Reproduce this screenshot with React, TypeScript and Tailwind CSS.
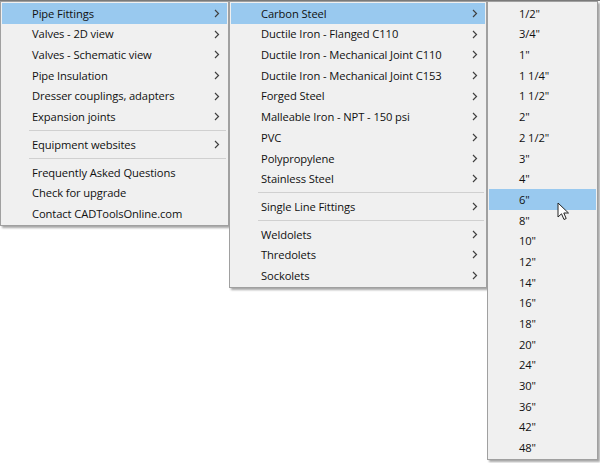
import React from "react";

type Item = { label: string; arrow?: boolean } | "sep";

const menu1: Item[] = [
  { label: "Pipe Fittings", arrow: true },
  { label: "Valves - 2D view", arrow: true },
  { label: "Valves - Schematic view", arrow: true },
  { label: "Pipe Insulation", arrow: true },
  { label: "Dresser couplings, adapters", arrow: true },
  { label: "Expansion joints", arrow: true },
  "sep",
  { label: "Equipment websites", arrow: true },
  "sep",
  { label: "Frequently Asked Questions" },
  { label: "Check for upgrade" },
  { label: "Contact CADToolsOnline.com" },
];

const menu2: Item[] = [
  { label: "Carbon Steel", arrow: true },
  { label: "Ductile Iron - Flanged C110", arrow: true },
  { label: "Ductile Iron - Mechanical Joint C110", arrow: true },
  { label: "Ductile Iron - Mechanical Joint C153", arrow: true },
  { label: "Forged Steel", arrow: true },
  { label: "Malleable Iron - NPT - 150 psi", arrow: true },
  { label: "PVC", arrow: true },
  { label: "Polypropylene", arrow: true },
  { label: "Stainless Steel", arrow: true },
  "sep",
  { label: "Single Line Fittings", arrow: true },
  "sep",
  { label: "Weldolets", arrow: true },
  { label: "Thredolets", arrow: true },
  { label: "Sockolets", arrow: true },
];

const sizes = [
  '1/2"', '3/4"', '1"', '1 1/4"', '1 1/2"', '2"', '2 1/2"', '3"', '4"', '6"', '8"',
  '10"', '12"', '14"', '16"', '18"', '20"', '24"', '30"', '36"', '42"', '48"',
];
const menu3: Item[] = sizes.map((s) => ({ label: s }));

function Chevron() {
  return (
    <svg width="6" height="9" viewBox="0 0 6 9" className="shrink-0">
      <polyline points="1,1 4.5,4.5 1,8" fill="none" stroke="#404040" strokeWidth="1.2" />
    </svg>
  );
}

function Menu({ items, active, width }: { items: Item[]; active: number; width: string }) {
  return (
    <div
      className={`${width} shrink-0 bg-[#f0f0f0] border border-[#a0a0a0] py-[1px] px-[1px] shadow-[2px_2px_2px_rgba(0,0,0,0.35)]`}
    >
      {items.map((it, i) =>
        it === "sep" ? (
          <div key={i} className="h-[7px] flex items-center pl-[27px] pr-[1px]">
            <div className="h-px w-full bg-[#d0d0d0]" />
          </div>
        ) : (
          <div
            key={i}
            className={`h-[20.7px] flex items-center pl-[30px] pr-[7px] ${
              i === active ? "bg-[#99c9ef]" : ""
            }`}
          >
            <span className="flex-1 whitespace-nowrap text-[11.2px] text-[#111] leading-none tracking-[-0.1px]">{it.label}</span>
            {it.arrow && <Chevron />}
          </div>
        )
      )}
    </div>
  );
}

export default function App() {
  return (
    <div
      className="relative w-[600px] h-[463px] bg-white overflow-hidden"
      style={{ fontFamily: '"Segoe UI", "Open Sans", "Noto Sans", sans-serif' }}
    >
      <div className="h-px w-full bg-[#7a7a7a]" />
      <div className="flex items-start">
        <Menu items={menu1} active={0} width="w-[229px]" />
        <Menu items={menu2} active={0} width="w-[258px]" />
        <Menu items={menu3} active={9} width="w-[111px]" />
      </div>
      <svg
        className="absolute left-[557px] top-[202px]"
        width="14"
        height="20"
        viewBox="0 0 14 20"
      >
        <path
          d="M1 1 L1 15 L4.5 11.8 L7 17.5 L9.2 16.5 L6.8 11 L11.5 11 Z"
          fill="white"
          stroke="#222"
          strokeWidth="1"
          strokeLinejoin="round"
        />
      </svg>
    </div>
  );
}
